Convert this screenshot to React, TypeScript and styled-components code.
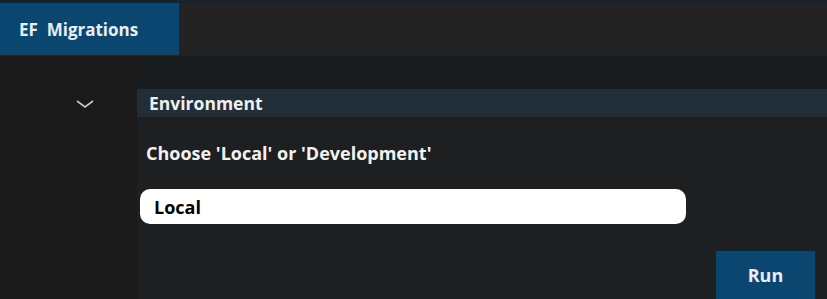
import styled, { createGlobalStyle } from "styled-components";

const Global = createGlobalStyle`
  html, body {
    margin: 0;
    padding: 0;
    background: #1a1a1a;
    font-family: "Open Sans", "Liberation Sans", sans-serif;
  }
`;

const Page = styled.div`
  width: 827px;
  height: 299px;
  overflow: hidden;
  display: flex;
  flex-direction: column;
`;

const TopBar = styled.div`
  height: 56px;
  background: #232323;
  border-top: 3px solid #19212a;
  box-sizing: border-box;
  display: flex;
`;

const Tab = styled.div`
  width: 179px;
  height: 52px;
  background: #0b4670;
  color: #e8eef4;
  font-weight: 700;
  font-size: 17px;
  display: flex;
  align-items: center;
  padding-left: 19px;
  box-sizing: border-box;
  white-space: pre;
`;

const Body = styled.div`
  flex: 1;
  display: flex;
`;

const Side = styled.div`
  width: 137px;
  background: #1a1a1a;
  display: flex;
  justify-content: center;
  padding-top: 42px;
  padding-left: 32px;
  box-sizing: border-box;
`;

const Panel = styled.div`
  flex: 1;
  display: flex;
  flex-direction: column;
  background: #1e1f20;
  padding-top: 33px;
  box-shadow: inset 0 33px 0 #181c1e;
`;

const Header = styled.div`
  height: 28px;
  background: #212e38;
  color: #f0f0f0;
  font-weight: 700;
  font-size: 17.5px;
  display: flex;
  align-items: center;
  padding-left: 12px;
`;

const Prompt = styled.div`
  color: #f2f2f2;
  font-weight: 700;
  font-size: 18px;
  line-height: 24px;
  margin: 24px 0 0 9px;
`;

const Input = styled.input`
  margin: 24px 0 0 3px;
  width: 546px;
  height: 35px;
  border: none;
  border-radius: 10px;
  background: #ffffff;
  color: #000;
  font-family: inherit;
  font-weight: 700;
  font-size: 18px;
  padding: 0 0 0 14px;
  box-sizing: border-box;
  outline: none;
`;

const Footer = styled.div`
  display: flex;
  justify-content: flex-end;
  padding-right: 12px;
  margin-top: 27px;
`;

const RunButton = styled.button`
  width: 99px;
  height: 48px;
  background: #0b4670;
  color: #e8eef4;
  border: none;
  font-family: inherit;
  font-weight: 700;
  font-size: 18px;
  padding: 0;
`;

export default function App() {
  return (
    <Page>
      <Global />
      <TopBar>
        <Tab>EF  Migrations</Tab>
      </TopBar>
      <Body>
        <Side>
          <svg width="20" height="12" viewBox="0 0 20 12">
            <path d="M2 3 L10 9 L18 3" fill="none" stroke="#c8c8c8" strokeWidth="1.6" />
          </svg>
        </Side>
        <Panel>
          <Header>Environment</Header>
          <Prompt>Choose 'Local' or 'Development'</Prompt>
          <Input defaultValue="Local" />
          <Footer>
            <RunButton>Run</RunButton>
          </Footer>
        </Panel>
      </Body>
    </Page>
  );
}
